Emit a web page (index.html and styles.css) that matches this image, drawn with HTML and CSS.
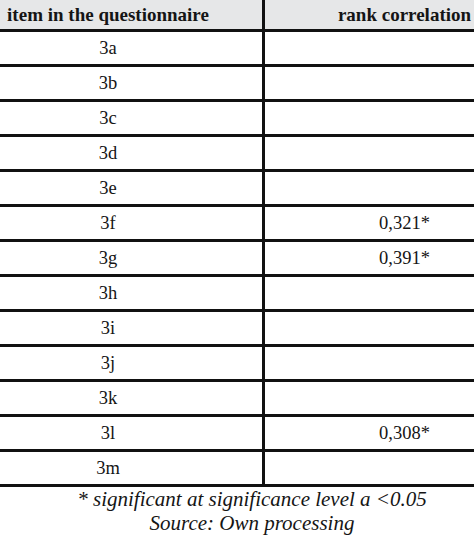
FILE: index.html
```html
<!DOCTYPE html>
<html>
<head>
<meta charset="utf-8">
<link rel="stylesheet" href="styles.css">
</head>
<body>
<div class="page">
  <table class="data">
    <thead>
      <tr><th class="c1">item in the questionnaire</th><th class="c2">rank correlation</th></tr>
    </thead>
    <tbody>
      <tr><td>3a</td><td></td></tr>
      <tr><td>3b</td><td></td></tr>
      <tr><td>3c</td><td></td></tr>
      <tr><td>3d</td><td></td></tr>
      <tr><td>3e</td><td></td></tr>
      <tr><td>3f</td><td>0,321*</td></tr>
      <tr><td>3g</td><td>0,391*</td></tr>
      <tr><td>3h</td><td></td></tr>
      <tr><td>3i</td><td></td></tr>
      <tr><td>3j</td><td></td></tr>
      <tr><td>3k</td><td></td></tr>
      <tr><td>3l</td><td>0,308*</td></tr>
      <tr><td>3m</td><td></td></tr>
    </tbody>
  </table>
  <div class="notes">
    <p>* significant at significance level a &lt;0.05</p>
    <p>Source: Own processing</p>
  </div>
</div>
</body>
</html>
```
FILE: styles.css
```css
html, body {
  margin: 0;
  padding: 0;
  background: #fff;
}
body {
  width: 474px;
  height: 537px;
  overflow: hidden;
  font-family: "Liberation Serif", "DejaVu Serif", serif;
  color: #151515;
}
.page {
  width: 474px;
  overflow: hidden;
}
.data {
  border-collapse: collapse;
  margin-left: -46px;
  table-layout: fixed;
  width: 590px;
}
.data th {
  background: #e6e7e8;
  font-weight: bold;
  font-size: 19px;
  height: 29px;
  padding: 0;
  text-align: center;
  border-bottom: 3px solid #111;
  vertical-align: middle;
}
.data .c1 {
  width: 308px;
  border-right: 3px solid #111;
}
.data td {
  height: 32px;
  padding: 0;
  font-size: 18.5px;
  text-align: center;
  border-bottom: 3px solid #111;
  vertical-align: middle;
}
.data td:first-child {
  border-right: 3px solid #111;
}
.notes {
  text-align: center;
  font-style: italic;
  font-size: 21px;
  padding-left: 30px;
}
.notes p {
  margin: 0;
  line-height: 24px;
}
```
